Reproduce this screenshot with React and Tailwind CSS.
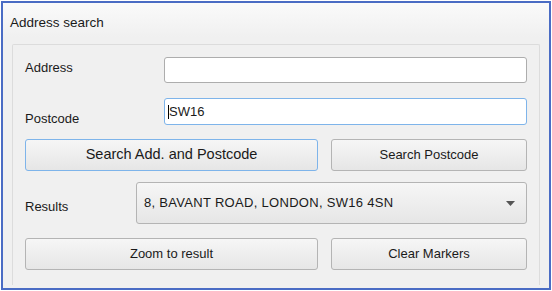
const face =
  "h-full flex items-center rounded-[3px] border bg-gradient-to-b from-[#f6f6f6] to-[#e6e6e6] text-[#1a1a1a]";
const btn = face + " justify-center";

export default function App() {
  return (
    <div
      className="w-[552px] h-[291px] overflow-hidden bg-white"
      style={{ fontFamily: "'Liberation Sans', Arial, sans-serif" }}
    >
      <div className="w-[550px] h-[289px] ml-[1px] mt-[1px] border-[2px] border-[#4a6cc4] bg-gradient-to-b from-[#fafafa] to-[#f0f0f0] to-[12%] flex flex-col">
        <div className="h-[41px] pl-[7px] pt-[13px] text-[13.5px] text-[#1a1a1a] leading-none">
          Address search
        </div>
        <div className="ml-[9px] mr-[9px] flex-1 mb-[3px] border border-[#dcdcdc] border-b-0 rounded-t-[2px] pl-[12px] pr-[12px] flex flex-col">
          <div className="h-[26px] mt-[12px] flex items-center">
            <div className="w-[139px] text-[13px] text-[#1a1a1a] -mt-[4px]">Address</div>
            <div className="flex-1 h-full rounded-[3px] border border-[#adadad] bg-white" />
          </div>
          <div className="h-[27px] mt-[15px] flex">
            <div className="w-[139px] text-[13px] text-[#1a1a1a] self-end -mb-[3px]">Postcode</div>
            <div className="flex-1 h-full rounded-[3px] border border-[#7eb4ea] bg-white flex items-center pl-[3px] text-[13px] text-[#1a1a1a]">
              <span className="w-px h-[14px] bg-black" />
              SW16
            </div>
          </div>
          <div className="h-[32px] mt-[14px] flex gap-[13px]">
            <div className={btn + " w-[293px] border-[#7eb4ea] text-[14.5px]"}>
              Search Add. and Postcode
            </div>
            <div className={btn + " flex-1 border-[#b4b4b4] text-[13px]"}>Search Postcode</div>
          </div>
          <div className="h-[42px] mt-[11px] flex items-center">
            <div className="w-[111px] text-[13px] text-[#1a1a1a] mt-[8px]">Results</div>
            <div className={face + " flex-1 justify-between border-[#b4b4b4] pl-[7px] pr-[11px] text-[13px]"}>
              <span className="tracking-[0.3px]">8, BAVANT ROAD, LONDON, SW16 4SN</span>
              <svg width="9" height="5" viewBox="0 0 9 5">
                <path d="M0 0h9L4.5 5z" fill="#555" />
              </svg>
            </div>
          </div>
          <div className="h-[32px] mt-[14px] flex gap-[13px]">
            <div className={btn + " w-[293px] border-[#b4b4b4] text-[13px]"}>Zoom to result</div>
            <div className={btn + " flex-1 border-[#b4b4b4] text-[13px]"}>Clear Markers</div>
          </div>
        </div>
      </div>
    </div>
  );
}
